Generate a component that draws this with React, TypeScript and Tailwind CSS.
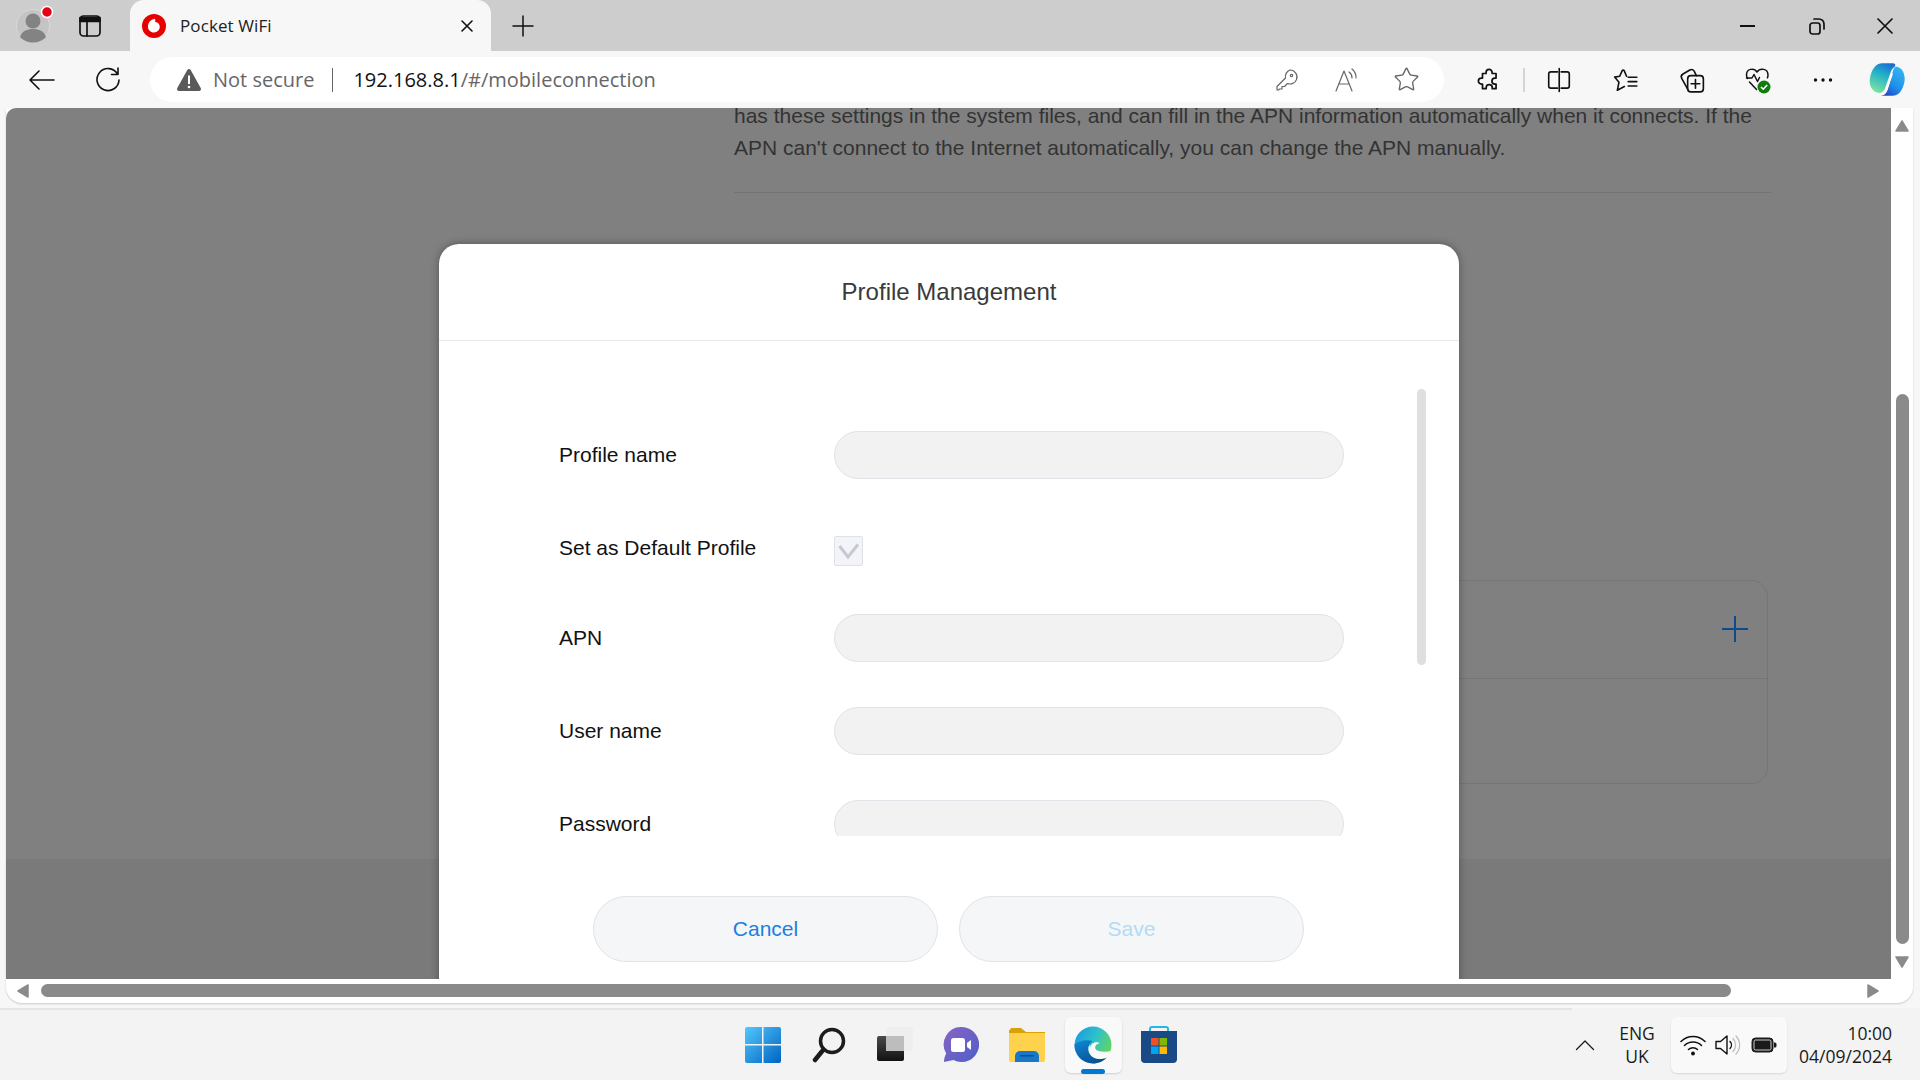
import React from 'react'
import { Star } from 'lucide-react'

const stroke = { fill: 'none', stroke: 'currentColor', strokeLinecap: 'round', strokeLinejoin: 'round' } as const

const Vodafone = () => (
  <svg width="24" height="24" viewBox="0 0 24 24">
    <circle cx="12" cy="12" r="12" fill="#e60000" />
    <path transform="translate(12 12) scale(0.86) translate(-12 -12)" d="M13 3.600c-5 1-8 4.600-8 8.900 0 4 3 7 7 7s6.700-3 6.700-6.500c0-3-2-5.200-5.200-5.600-.2-1.600.3-2.800-.5-3.800z" fill="#fff" />
  </svg>
)

const Avatar = () => (
  <svg width="40" height="40" viewBox="0 0 40 40">
    <circle cx="17" cy="22" r="16.500" fill="#c4c4c4" stroke="#d8d8d8" />
    <circle cx="17" cy="17" r="7.500" fill="#838383" />
    <path d="M4 33c2-6 7-8 13-8s11 2 13 8c-3 3.500-8 5.500-13 5.500S7 36.500 4 33z" fill="#838383" />
    <circle cx="31" cy="8" r="5.500" fill="#e60012" stroke="#fff" strokeWidth="1.500" />
  </svg>
)

const TabsIcon = () => (
  <svg width="24" height="24" viewBox="0 0 24 24" {...stroke} strokeWidth="1.700" className="text-[#111]">
    <rect x="2" y="2" width="20" height="20" rx="3.500" />
    <path d="M2 3.500h20v4H2z" fill="currentColor" />
    <path d="M9 7v15" />
  </svg>
)

const Warning = () => (
  <svg width="26" height="24" viewBox="0 0 26 24">
    <path d="M11.300 2c.8-1.400 2.600-1.400 3.400 0l10 18c.8 1.400-.1 3-1.700 3H3c-1.600 0-2.500-1.600-1.700-3z" fill="#5a5a5a" />
    <rect x="12" y="7.500" width="2" height="8.500" fill="#fff" />
    <circle cx="13" cy="19" r="1.300" fill="#fff" />
  </svg>
)

const KeyIcon = () => (
  <svg width="24" height="24" viewBox="0 0 24 24" {...stroke} strokeWidth="1.200" className="text-[#666]">
    <path d="M15 2a7 7 0 0 1 6.500 9.600 7 7 0 0 1-9 3.900L9.500 18.500H7V21H4.500l-1 1H2v-3.500l8.500-8.500A7 7 0 0 1 15 2z" />
    <circle cx="16.500" cy="7.500" r="1.200" />
  </svg>
)

const ReadAloud = () => (
  <svg width="26" height="26" viewBox="0 0 26 26" {...stroke} strokeWidth="1.200" className="text-[#666]">
    <path d="M2 24 10 4l8 20M5 17h10" />
    <path d="M15 5a7 7 0 0 1 3 6M18 2a11 11 0 0 1 4 9" />
  </svg>
)

const Extensions = () => (
  <svg width="26" height="26" viewBox="0 0 24 24" {...stroke} strokeWidth="1.600" className="text-[#111]">
    <path d="M9.300 6V5a2.800 2.800 0 0 1 5.600 0v1h3.600v4.200h-1a2.800 2.800 0 0 0 0 5.600h1V20H15v-1a2.800 2.800 0 0 0-5.600 0v1H6v-4.200H5a2.800 2.800 0 0 1 0-5.600h1V6z" />
  </svg>
)

const SplitIcon = () => (
  <svg width="26" height="26" viewBox="0 0 24 24" {...stroke} strokeWidth="1.500" className="text-[#111]">
    <path d="M10.500 4.500H4.500a2 2 0 0 0-2 2v11a2 2 0 0 0 2 2h6M14 4.500h5.500a2 2 0 0 1 2 2v11a2 2 0 0 1-2 2H14M12.200 1.500v21" />
  </svg>
)

const FavoritesIcon = () => (
  <svg width="26" height="26" viewBox="0 0 24 24" {...stroke} strokeWidth="1.500" className="text-[#111]">
    <path d="M14 9.500h8M14 13.500h8M14 17.500h8" />
    <path d="M12.500 8.500 10.300 3.300a1 1 0 0 0-1.800 0L6.200 8.500l-4.700.8 4 4.700L4 21.500l6.500-3.500" />
  </svg>
)

const CollectionsIcon = () => (
  <svg width="26" height="26" viewBox="0 0 24 24" {...stroke} strokeWidth="1.500" className="text-[#111]">
    <rect x="8" y="8" width="14.500" height="15" rx="3" />
    <path d="M15.200 11.500v8M11.200 15.500h8" />
    <path d="M8 20.500 2.500 10.500a3 3 0 0 1 1.200-4L10 2.800a3 3 0 0 1 4 1l2 4.200" />
  </svg>
)

const HealthIcon = () => (
  <svg width="28" height="28" viewBox="0 0 28 28" className="text-[#111]">
    <g {...stroke} strokeWidth="1.500">
      <path d="M13 6C10 1.500 2.500 2.500 2.500 9c0 1.500.5 2.500 1 3.500M13 6c3-4.500 11-3.500 11 3 0 1-.2 2-.6 2.800" />
      <path d="M2.500 12H8l2-3.500 3.500 7 2-4" />
      <path d="M5.500 16l7 7.500" />
    </g>
    <circle cx="20" cy="21" r="6.500" fill="#107c10" />
    <path d="M17 21l2.200 2.200 4-4.200" fill="none" stroke="#fff" strokeWidth="1.600" />
  </svg>
)

const CopilotIcon = () => (
  <svg width="37" height="37" viewBox="0 0 32 32">
    <defs>
      <linearGradient id="cpa" x1="0.700" y1="0" x2="0.300" y2="1">
        <stop offset="0" stopColor="#1b6fd1" />
        <stop offset="0.400" stopColor="#22b1c8" />
        <stop offset="1" stopColor="#7ee3a0" />
      </linearGradient>
      <linearGradient id="cpb" x1="0.800" y1="0" x2="0.200" y2="1">
        <stop offset="0" stopColor="#35b6f2" />
        <stop offset="0.600" stopColor="#1f8fe8" />
        <stop offset="1" stopColor="#2a3fc0" />
      </linearGradient>
    </defs>
    <path d="M24 5c3 0 6 2 7 6 1 3 1 6 0 9-1.500 5-4 10-10 10H11c3 0 5-2 6-5l4-14c.5-2 1.500-6 3-6z" fill="url(#cpb)" />
    <path d="M12 2h9c3 0 3 2 2 3-2 1.500-3 3-3.500 5L15 23c-.8 2.500-2 4-4 4.500-3 .5-7-1-9-6-1-3.500-.5-7 .5-10C4 6 8 2 12 2z" fill="url(#cpa)" />
    <path d="M20.500 11.500 16 24" stroke="#fff" strokeWidth="1.800" strokeLinecap="round" />
  </svg>
)

const WinLogo = () => (
  <svg width="36" height="36" viewBox="0 0 36 36">
    <defs>
      <linearGradient id="wl" x1="0" y1="0" x2="1" y2="1">
        <stop offset="0" stopColor="#52c8fb" />
        <stop offset="1" stopColor="#0063c4" />
      </linearGradient>
    </defs>
    <path d="M2 0h15v17H0V2a2 2 0 0 1 2-2zM18.500 0H34a2 2 0 0 1 2 2v15H18.500zM0 18.500h17V36H2a2 2 0 0 1-2-2zM18.500 18.500H36V34a2 2 0 0 1-2 2H18.500z" fill="url(#wl)" />
  </svg>
)

const SearchIcon = () => (
  <svg width="34" height="36" viewBox="0 0 34 36" fill="none" stroke="#1c1c1c" strokeLinecap="round">
    <circle cx="20" cy="14" r="11.500" strokeWidth="3.500" />
    <path d="M11.500 22.500 3 33" strokeWidth="4.500" />
  </svg>
)

const TaskView = () => (
  <svg width="36" height="36" viewBox="0 0 36 36">
    <defs>
      <linearGradient id="tv" x1="0" y1="0" x2="0" y2="1">
        <stop offset="0" stopColor="#4a4a4a" />
        <stop offset="1" stopColor="#111" />
      </linearGradient>
    </defs>
    <rect x="0" y="9" width="27" height="25" rx="2" fill="url(#tv)" />
    <rect x="9" y="0" width="27" height="24" rx="2" fill="#ececec" fillOpacity="0.800" />
    <rect x="9" y="9" width="18" height="15" fill="#bdbdbd" />
  </svg>
)

const ChatIcon = () => (
  <svg width="36" height="36" viewBox="0 0 36 36">
    <defs>
      <linearGradient id="ch" x1="0" y1="0" x2="1" y2="1">
        <stop offset="0" stopColor="#8a63c4" />
        <stop offset="1" stopColor="#4d5fc9" />
      </linearGradient>
    </defs>
    <path d="M18.500 0a17.500 17.500 0 1 1-8 33L1 35c0-3 .8-6 2.200-8.500A17.500 17.500 0 0 1 18.500 0z" fill="url(#ch)" />
    <rect x="8" y="11" width="14" height="14" rx="2.500" fill="#fff" />
    <path d="M24 16l4-3v10l-4-3z" fill="#fff" />
  </svg>
)

const FolderIcon = () => (
  <svg width="36" height="34" viewBox="0 0 36 34">
    <path d="M1 2a2 2 0 0 1 2-2h9l5 4h19v6H0V2z" fill="#d9a007" />
    <path d="M0 5h36v27a2 2 0 0 1-2 2H2a2 2 0 0 1-2-2z" fill="#ffd24d" />
    <path d="M6 34v-6a5 5 0 0 1 5-5h14a5 5 0 0 1 5 5v6z" fill="#1877c9" />
    <rect x="11" y="27" width="14" height="1.500" fill="#0d4f8f" />
  </svg>
)

const EdgeIcon = () => (
  <svg width="38" height="38" viewBox="0 0 38 38">
    <defs>
      <linearGradient id="eg" x1="0" y1="0.200" x2="1" y2="0.700">
        <stop offset="0" stopColor="#1a9ae0" />
        <stop offset="0.500" stopColor="#31c2c8" />
        <stop offset="1" stopColor="#6ad84f" />
      </linearGradient>
      <linearGradient id="eb" x1="0" y1="0" x2="0.600" y2="1">
        <stop offset="0" stopColor="#0f8ad6" />
        <stop offset="1" stopColor="#0a4f96" />
      </linearGradient>
    </defs>
    <circle cx="19" cy="19" r="18.500" fill="url(#eg)" />
    <path d="M.5 19C.5 29 8.500 37.500 19 37.500c5.500 0 10.500-2.200 14-6-6 2.500-13 2-16.500-2.500-3.500-4.500-2.500-11 2-14-6-2-14-.500-18.500 4z" fill="url(#eb)" />
    <path d="M33 31.500c-6 2.500-13 2-16.500-2.500-2.500-3.200-2.700-7.500-1-10.500 0 4 2.500 7 6 8 4 1 9 .5 15-1.500 1-.4 1.500-.4 1.500-.2-1 2.500-3 5-5 6.700z" fill="#f9f9f9" />
    <path d="M26 17c-2.500-1.500-6-1-8 1-1.500 1.500-2.300 3.500-2.300 5.500 0 2.500 2 4.500 6 4.500 3 0 8-.5 11.500-2.500-5 .5-11.500 0-12-3.500-.3-2.500 2-4.500 4.800-5z" fill="#f9f9f9" />
  </svg>
)

const StoreIcon = () => (
  <svg width="36" height="38" viewBox="0 0 36 38">
    <path d="M9 8V3a2 2 0 0 1 2-2h14a2 2 0 0 1 2 2v5" fill="none" stroke="#28b6e8" strokeWidth="2" />
    <path d="M0 5h36v28a4 4 0 0 1-4 4H4a4 4 0 0 1-4-4z" fill="#1a4a86" />
    <rect x="10" y="12" width="7.500" height="7.500" fill="#f25022" />
    <rect x="18.500" y="12" width="7.500" height="7.500" fill="#7fba00" />
    <rect x="10" y="20.500" width="7.500" height="7.500" fill="#00a4ef" />
    <rect x="18.500" y="20.500" width="7.500" height="7.500" fill="#ffb900" />
  </svg>
)

const WifiIcon = () => (
  <svg width="26" height="22" viewBox="0 0 26 22" {...stroke} strokeWidth="1.500" className="text-[#111]">
    <path d="M1 7.500a17 17 0 0 1 24 0M4.500 11.500a12 12 0 0 1 17 0M8.500 15.500a6.500 6.500 0 0 1 9 0" />
    <circle cx="13" cy="19.500" r="1.200" fill="currentColor" />
  </svg>
)

const VolumeIcon = () => (
  <svg width="26" height="24" viewBox="0 0 26 24" fill="none" strokeLinecap="round" strokeLinejoin="round">
    <path d="M1 8.500h4.500L12 3v18l-6.500-5.500H1z" stroke="#111" strokeWidth="1.400" />
    <path d="M15 8.500a5 5 0 0 1 0 7" stroke="#111" strokeWidth="1.400" />
    <path d="M18 5.500a9.500 9.500 0 0 1 0 13M21 3a13 13 0 0 1 0 18" stroke="#bbb" strokeWidth="1.200" />
  </svg>
)

const BatteryIcon = () => (
  <svg width="26" height="16" viewBox="0 0 26 16">
    <rect x="1" y="1" width="21" height="14" rx="3.500" fill="#1a1a1a" stroke="#1a1a1a" />
    <rect x="3" y="3" width="17" height="10" rx="1.500" fill="#1a1a1a" stroke="#f9f9f9" strokeWidth="0.800" />
    <path d="M23 5.500h1a1.500 1.500 0 0 1 1.500 1.500v2a1.500 1.500 0 0 1-1.500 1.500h-1z" fill="#1a1a1a" />
  </svg>
)

const Triangle = ({ dir }: { dir: 'up' | 'down' | 'left' | 'right' }) => {
  const points = { up: '7,1 13,11 1,11', down: '1,1 13,1 7,11', left: '11,1 11,13 1,7', right: '1,1 11,7 1,13' }
  const isV = dir === 'up' || dir === 'down'
  return (
    <svg width={isV ? 14 : 12} height={isV ? 12 : 14} viewBox={isV ? '0 0 14 12' : '0 0 12 14'}>
      <polygon points={points[dir]} fill="#8a8a8a" stroke="#8a8a8a" strokeWidth="1.500" strokeLinejoin="round" />
    </svg>
  )
}

const ToolBtn = ({ className, children }: { className: string; children: React.ReactNode }) => (
  <div className={`w-10 h-10 flex items-center justify-center shrink-0 ${className}`}>{children}</div>
)

const FieldRow = ({ label }: { label: string }) => (
  <div className="flex mb-[45px]">
    <div className="w-[275px] h-12 flex items-center text-[21px] text-[#111]">{label}</div>
    <div className="w-[510px] h-12 rounded-[24px] bg-[#f2f2f2] border border-[#e2e2e8]" />
  </div>
)

const TaskIcon = ({ children }: { children: React.ReactNode }) => (
  <div className="w-[66px] h-[70px] flex items-center justify-center shrink-0">{children}</div>
)

export default function App() {
  return (
    <div className="w-[1920px] h-[1080px] flex flex-col overflow-hidden bg-[#f7f7f7] font-['Open_Sans','Noto_Sans',sans-serif]">
      {/* tab strip */}
      <div className="h-[51px] bg-[#cdcdcd] flex shrink-0">
        <div className="w-[66px] h-[51px] ml-[3px] flex items-center justify-center pb-1"><Avatar /></div>
        <div className="w-10 h-[51px] ml-[1px] flex items-center justify-center"><TabsIcon /></div>
        <div className="w-[361px] ml-5 rounded-t-[14px] bg-[#f7f7f7] flex items-center pl-3">
          <Vodafone />
          <span className="ml-[14px] text-[17px] text-[#222] tracking-[0.1px]">Pocket WiFi</span>
          <svg className="ml-auto mr-[17px] text-[#111]" width="14" height="14" viewBox="0 0 14 14" {...stroke} strokeWidth="1.600">
            <path d="M2 2l10 10M12 2 2 12" />
          </svg>
        </div>
        <div className="w-10 flex items-center justify-center ml-3">
          <svg width="22" height="22" viewBox="0 0 22 22" {...stroke} strokeWidth="1.500" className="text-[#111]">
            <path d="M11 1v20M1 11h20" />
          </svg>
        </div>
        <div className="w-[68px] flex items-center justify-center ml-[1172px]">
          <svg width="18" height="4" viewBox="0 0 18 4"><rect width="15" height="2" y="1" fill="#111" /></svg>
        </div>
        <div className="w-[68px] flex items-center justify-center">
          <svg width="18" height="20" viewBox="0 0 18 20" {...stroke} strokeWidth="1.700" className="text-[#111]">
            <rect x="2" y="7" width="10" height="11" rx="2.500" />
            <path d="M6 3h5a5 5 0 0 1 5 5v5" />
          </svg>
        </div>
        <div className="w-[68px] flex items-center justify-center">
          <svg width="18" height="18" viewBox="0 0 18 18" {...stroke} strokeWidth="1.700" className="text-[#111]">
            <path d="M2 2l14 14M16 2 2 16" />
          </svg>
        </div>
      </div>

      {/* toolbar */}
      <div className="h-[57px] flex items-center shrink-0 bg-[#f7f7f7]">
        <ToolBtn className="ml-[22px]">
          <svg width="28" height="22" viewBox="0 0 28 22" {...stroke} strokeWidth="1.600" className="text-[#111]">
            <path d="M26 11H2M11 2l-9 9 9 9" />
          </svg>
        </ToolBtn>
        <ToolBtn className="ml-[26px]">
          <svg width="26" height="26" viewBox="0 0 26 26" {...stroke} strokeWidth="1.600" className="text-[#111]">
            <path d="M22.500 7A11 11 0 1 0 24 13M23 1v6.500h-6.500" />
          </svg>
        </ToolBtn>
        <div className="ml-[22px] w-[1294px] h-[45px] rounded-full bg-white flex items-center shrink-0">
          <span className="ml-[26px]"><Warning /></span>
          <span className="ml-[11px] text-[20px] text-[#666]">Not secure</span>
          <span className="ml-[18px] w-px h-6 bg-[#666]" />
          <span className="ml-[20px] text-[20px] text-[#111]">192.168.8.1<span className="text-[#666]">/#/mobileconnection</span></span>
          <span className="ml-auto w-[24px] flex justify-center"><KeyIcon /></span>
          <span className="ml-[35px] flex justify-center"><ReadAloud /></span>
          <span className="ml-[33px] mr-[24px] text-[#666]"><Star size={27} strokeWidth={1.200} /></span>
        </div>
        <ToolBtn className="ml-[25px]"><Extensions /></ToolBtn>
        <div className="ml-[14px] w-0.5 h-6 bg-[#d4d4d4] shrink-0" />
        <ToolBtn className="ml-[14px]"><SplitIcon /></ToolBtn>
        <ToolBtn className="ml-[27px]"><FavoritesIcon /></ToolBtn>
        <ToolBtn className="ml-[26px]"><CollectionsIcon /></ToolBtn>
        <ToolBtn className="ml-[26px]"><HealthIcon /></ToolBtn>
        <ToolBtn className="ml-[25px]">
          <svg width="20" height="6" viewBox="0 0 20 6" fill="#111">
            <circle cx="2.500" cy="3" r="1.700" /><circle cx="10" cy="3" r="1.700" /><circle cx="17.500" cy="3" r="1.700" />
          </svg>
        </ToolBtn>
        <ToolBtn className="ml-[23px]"><CopilotIcon /></ToolBtn>
      </div>

      {/* browser window body */}
      <div className="h-[895px] shrink-0 pl-[6px]">
        <div className="w-[1907px] h-[895px] bg-white rounded-b-[16px] shadow-[0_1px_2px_rgba(0,0,0,0.18)] flex flex-col">
          <div className="h-[871px] flex">
            <div className="w-[1885px] h-[871px] relative overflow-hidden rounded-tl-[10px] bg-[#808080] flex flex-col font-['Liberation_Sans',sans-serif]">
              <div className="h-[751px] pl-[728px] shrink-0">
                <div className="w-[1037px] -mt-[8px] pb-[28px] border-b border-[#747474] text-[21px] leading-[32px] text-[#333]">
                  <p className="whitespace-nowrap">has these settings in the system files, and can fill in the APN information automatically when it connects. If the</p>
                  <p className="whitespace-nowrap">APN can&apos;t connect to the Internet automatically, you can change the APN manually.</p>
                </div>
                <div className="w-[1034px] h-[204px] mt-[387px] rounded-[17px] border border-[#757575]">
                  <div className="h-[98px] border-b border-[#757575] flex items-center justify-end pr-[18px] pb-[2px]">
                    <svg width="28" height="28" viewBox="0 0 28 28" fill="none" stroke="#0f4a8a" strokeWidth="2">
                      <path d="M14 1v26M1 14h26" />
                    </svg>
                  </div>
                </div>
              </div>
              <div className="h-[120px] bg-[#7a7a7a] pl-[1448px] pt-[27px] text-[18px] text-[#2c3a45] shrink-0">t</div>

              {/* modal */}
              <div className="absolute left-[433px] top-[136px] w-[1020px] h-[760px] rounded-t-[20px] bg-white shadow-[0_0_8px_rgba(0,0,0,0.35)]">
                <div className="h-[97px] border-b border-[#e8e8e8] flex items-center justify-center text-[24px] text-[#3a3a3a]">Profile Management</div>
                <div className="relative h-[495px] overflow-hidden pt-[90px] pl-[120px]">
                  <FieldRow label="Profile name" />
                  <div className="flex h-[45px] mb-[45px]">
                    <div className="w-[275px] h-12 flex items-center text-[21px] text-[#111]">Set as Default Profile</div>
                    <div className="w-[29px] h-[30px] mt-3 rounded-[2px] bg-[#f2f4fa] border border-[#dfe1e8] flex items-center justify-center">
                      <svg width="22" height="16" viewBox="0 0 22 16" fill="none" stroke="#c6c9d0" strokeWidth="3">
                        <path d="M1.500 3l8.500 11L20 1.500" />
                      </svg>
                    </div>
                  </div>
                  <FieldRow label="APN" />
                  <FieldRow label="User name" />
                  <FieldRow label="Password" />
                  <div className="absolute right-[33px] top-[48px] w-[9px] h-[276px] rounded-full bg-[#dfdfe1]" />
                </div>
                <div className="flex gap-[21px] pt-[60px] pl-[154px]">
                  <button className="w-[345px] h-[66px] rounded-[33px] bg-[#f5f6f8] border border-[#e2e2e8] text-[21px] text-[#1a7fe0]">Cancel</button>
                  <button className="w-[345px] h-[66px] rounded-[33px] bg-[#f5f6f8] border border-[#e2e2e8] text-[21px] text-[#b0dcf6]">Save</button>
                </div>
              </div>
            </div>
            {/* vertical scrollbar */}
            <div className="w-[22px] flex flex-col items-center pt-3">
              <Triangle dir="up" />
              <div className="w-[13px] h-[550px] mt-[262px] rounded-full bg-[#8a8a8a] shrink-0" />
              <div className="mt-3"><Triangle dir="down" /></div>
            </div>
          </div>
          {/* horizontal scrollbar */}
          <div className="h-[24px] flex items-center pb-[1px]">
            <div className="ml-[11px]"><Triangle dir="left" /></div>
            <div className="ml-3 w-[1690px] h-[13px] rounded-full bg-[#8a8a8a]" />
            <div className="ml-[136px]"><Triangle dir="right" /></div>
          </div>
        </div>
      </div>

      <div className="h-[5px] shrink-0" />
      <div className="h-[2px] bg-[#f3f3f3] shrink-0"><div className="w-[1572px] h-[2px] bg-[#e5e5e5]" /></div>

      {/* taskbar */}
      <div className="h-[70px] bg-[#f3f3f3] flex items-center pl-[730px] shrink-0 text-[17.5px] text-[#1a1a1a]">
        <TaskIcon><WinLogo /></TaskIcon>
        <TaskIcon><SearchIcon /></TaskIcon>
        <TaskIcon><TaskView /></TaskIcon>
        <TaskIcon><ChatIcon /></TaskIcon>
        <TaskIcon><FolderIcon /></TaskIcon>
        <div className="w-[66px] h-[70px] flex items-center justify-center shrink-0 relative">
          <div className="absolute left-[5px] top-[7px] w-[57px] h-[56px] rounded-[6px] bg-[#f9f9f9] shadow-[0_1px_2px_rgba(0,0,0,0.15)]" />
          <div className="relative"><EdgeIcon /></div>
          <div className="absolute left-[21px] top-[59px] w-6 h-[5px] rounded-full bg-[#0078d4]" />
        </div>
        <TaskIcon><StoreIcon /></TaskIcon>
        <div className="ml-[373px] w-10 flex justify-center shrink-0">
          <svg width="20" height="12" viewBox="0 0 20 12" {...stroke} strokeWidth="1.300">
            <path d="M1.500 10.500 10 2l8.500 8.500" />
          </svg>
        </div>
        <div className="ml-[7px] w-[50px] text-center leading-[23px] shrink-0">
          <div>ENG</div>
          <div>UK</div>
        </div>
        <div className="ml-[9px] w-[116px] h-[56px] rounded-[6px] bg-[#f9f9f9] shadow-[0_1px_2px_rgba(0,0,0,0.12)] flex items-center pl-[9px] shrink-0">
          <WifiIcon />
          <span className="ml-[9px]"><VolumeIcon /></span>
          <span className="ml-[10px]"><BatteryIcon /></span>
        </div>
        <div className="w-[105px] text-right leading-[23px] shrink-0">
          <div>10:00</div>
          <div>04/09/2024</div>
        </div>
      </div>
    </div>
  )
}
